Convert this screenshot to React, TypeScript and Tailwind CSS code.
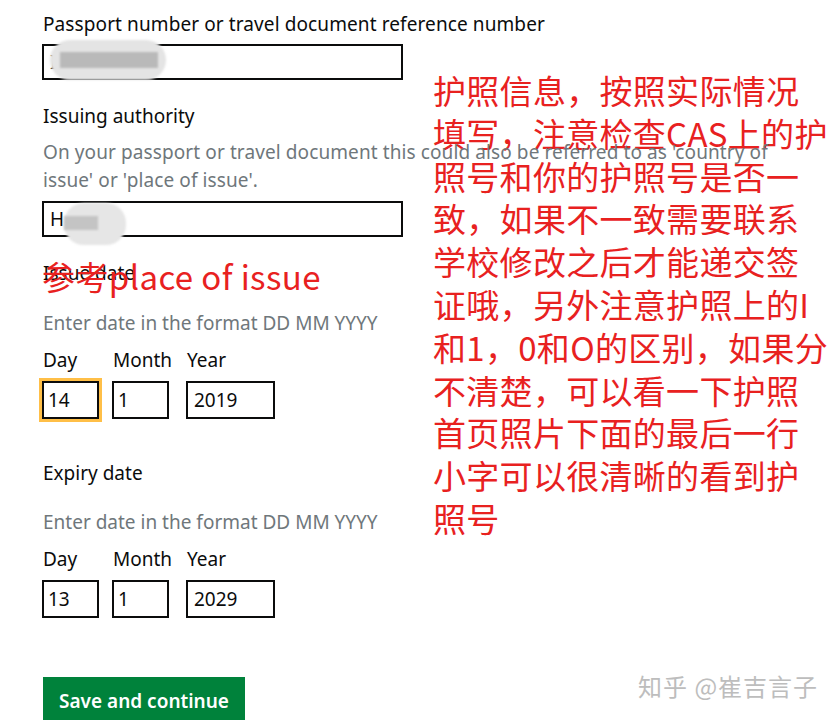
import React from "react";

const font = { fontFamily: '"Noto Sans", "Noto Sans CJK SC", sans-serif' };

function DateField({ day, month, year, focus }: { day: string; month: string; year: string; focus?: boolean }) {
  return (
    <div className="flex mt-[11px]">
      <div className="flex flex-col w-[70px]">
        <span className="text-[19px] leading-[25px] text-[#0b0c0c] ml-[1px]">Day</span>
        <div className={focus ? "mt-[5px] -ml-[3px] w-[63px] h-[44px] border-[3px] border-[#ffbf47] -mb-[3px]" : "mt-[8px] w-[57px] h-[38px]"}>
          <div className="w-[57px] h-[38px] border-2 border-[#0b0c0c] bg-white px-[4px] text-[19px] leading-[34px] text-[#0b0c0c]">{day}</div>
        </div>
      </div>
      <div className="flex flex-col w-[74px]">
        <span className="text-[19px] leading-[25px] text-[#0b0c0c] ml-[1px]">Month</span>
        <div className="mt-[8px] w-[57px] h-[38px] border-2 border-[#0b0c0c] bg-white px-[4px] text-[19px] leading-[34px] text-[#0b0c0c]">{month}</div>
      </div>
      <div className="flex flex-col">
        <span className="text-[19px] leading-[25px] text-[#0b0c0c] ml-[1px]">Year</span>
        <div className="mt-[8px] w-[89px] h-[38px] border-2 border-[#0b0c0c] bg-white px-[6px] text-[19px] leading-[34px] text-[#0b0c0c]">{year}</div>
      </div>
    </div>
  );
}

export default function App() {
  const lines = [
    "护照信息，按照实际情况",
    "填写，注意检查CAS上的护",
    "照号和你的护照号是否一",
    "致，如果不一致需要联系",
    "学校修改之后才能递交签",
    "证哦，另外注意护照上的I",
    "和1，0和O的区别，如果分",
    "不清楚，可以看一下护照",
    "首页照片下面的最后一行",
    "小字可以很清晰的看到护",
    "照号",
  ];
  return (
    <div className="relative w-[837px] h-[720px] overflow-hidden bg-white" style={font}>
      <div className="flex flex-col pl-[42px] pt-[12px]">
        <span className="ml-[1px] text-[19px] leading-[25px] tracking-[0.1px] text-[#0b0c0c]">Passport number or travel document reference number</span>
        <div className="mt-[7px] w-[361px] h-[36px] border-2 border-[#0b0c0c] px-[6px] text-[19px] leading-[32px] text-[#0b0c0c]">I</div>

        <span className="mt-[24px] ml-[1px] text-[19px] leading-[25px] text-[#0b0c0c]">Issuing authority</span>
        <p className="relative z-10 mt-[9px] ml-[1px] w-[770px] text-[19px] leading-[28px] tracking-[0.1px] text-[#6f777b]">
          On your passport or travel document this could also be referred to as 'country of issue' or 'place of issue'.
        </p>
        <div className="mt-[7px] w-[361px] h-[36px] border-2 border-[#0b0c0c] px-[6px] text-[19px] leading-[32px] text-[#0b0c0c]">H</div>

        <span className="mt-[24px] ml-[1px] text-[19px] leading-[25px] text-[#0b0c0c]">Issue date</span>
        <span className="mt-[23px] ml-[1px] text-[19px] leading-[28px] text-[#6f777b]">Enter date in the format DD MM YYYY</span>
        <DateField day="14" month="1" year="2019" focus />

        <span className="mt-[42px] ml-[1px] text-[19px] leading-[25px] text-[#0b0c0c]">Expiry date</span>
        <span className="mt-[22px] ml-[1px] text-[19px] leading-[28px] text-[#6f777b]">Enter date in the format DD MM YYYY</span>
        <DateField day="13" month="1" year="2029" />

        <button className="mt-[59px] ml-[1px] w-[202px] h-[52px] bg-[#00823b] text-white text-[19px] leading-[25px] font-semibold text-center pb-[4px]">
          Save and continue
        </button>
      </div>

      {/* blurred redactions */}
      <div className="absolute left-[50px] top-[40px] w-[116px] h-[40px] rounded-[20px] bg-[#e4e4e4] blur-[1px]" />
      <div className="absolute left-[60px] top-[52px] w-[98px] h-[16px] bg-[#b9b9b9] blur-[1px]" />
      <div className="absolute left-[64px] top-[203px] w-[62px] h-[42px] rounded-[20px] bg-[#e6e6e6] blur-[1px]" />
      <div className="absolute left-[64px] top-[216px] w-[34px] h-[14px] bg-[#c4c4c4] blur-[1px]" />

      {/* red annotations */}
      <div
        className="absolute left-[433px] top-[69px] text-[33px] leading-[42.8px] tracking-[0.3px] text-[#e8211f] whitespace-pre"
        style={{ fontFamily: '"Noto Sans CJK SC", sans-serif' }}
      >
        {lines.map((l) => (
          <div key={l}>{l}</div>
        ))}
      </div>
      <div
        className="absolute left-[42px] top-[254px] text-[33px] leading-[44px] tracking-[0.4px] text-[#e8211f] whitespace-pre"
        style={{ fontFamily: '"Noto Sans CJK SC", sans-serif' }}
      >
        参考place of issue
      </div>

      <div
        className="absolute left-[638px] top-[669px] text-[24px] leading-[34px] tracking-[1px] text-[#bdbdbd]"
        style={{ fontFamily: '"Noto Sans CJK SC", sans-serif' }}
      >
        知乎 @崔吉言子
      </div>
    </div>
  );
}
